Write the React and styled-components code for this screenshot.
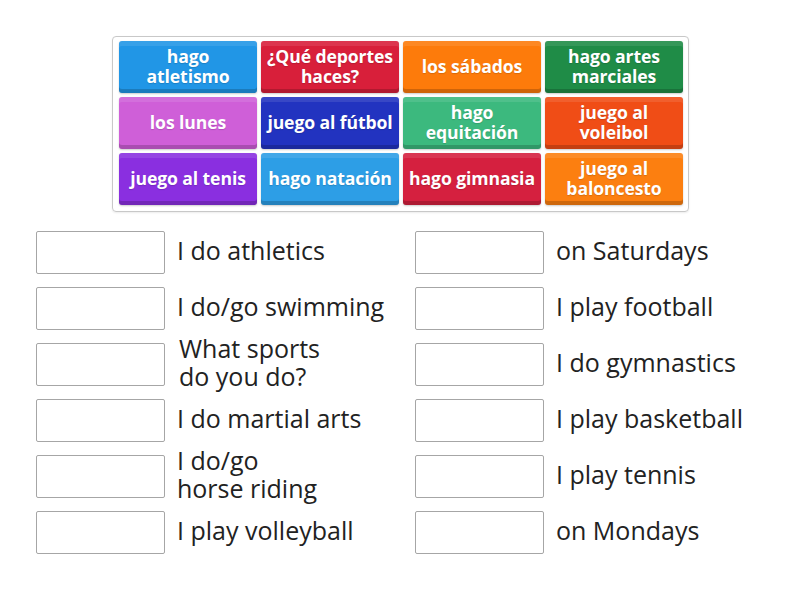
import React from "react";
import styled, { createGlobalStyle } from "styled-components";

const Global = createGlobalStyle`
  html, body { margin: 0; padding: 0; background: #fff; }
  body { font-family: "Open Sans", "Liberation Sans", sans-serif; }
`;

const Page = styled.div`
  width: 800px;
  height: 600px;
  padding-top: 36px;
  box-sizing: border-box;
`;

const Bank = styled.div`
  margin-left: 112px;
  width: fit-content;
  display: grid;
  grid-template-columns: repeat(4, 138px);
  grid-auto-rows: 52px;
  column-gap: 4px;
  row-gap: 4px;
  padding: 4px 5px 6px 6px;
  border: 1px solid #c8c8c8;
  border-radius: 4px;
  box-shadow: 0 1px 2px rgba(0,0,0,0.08);
`;

const Tile = styled.div`
  background: ${(p) => p.$c};
  border-radius: 3px;
  display: flex;
  align-items: center;
  justify-content: center;
  text-align: center;
  color: #fff;
  font-weight: 700;
  font-size: 17.6px;
  line-height: 20px;
  letter-spacing: -0.1px;
  white-space: pre-line;
  padding: 0 2px 2px;
  box-sizing: border-box;
  box-shadow: inset 0 5px 0 rgba(255,255,255,0.1), inset 0 -4px 0 rgba(0,0,0,0.18), 0 1px 2px rgba(0,0,0,0.2);
  text-shadow: 0 1px 1px rgba(0,0,0,0.15);
`;

const Answers = styled.div`
  display: grid;
  grid-template-columns: 379px 379px;
  grid-auto-flow: column;
  grid-template-rows: repeat(6, 43px);
  row-gap: 13px;
  margin: 19px 0 0 36px;
`;

const Item = styled.div`
  display: flex;
  align-items: center;
  gap: 12px;
`;

const Box = styled.div`
  width: 129px;
  height: 43px;
  box-sizing: border-box;
  border: 1px solid #a6a6a6;
  border-radius: 2px;
  background: #fff;
  flex: none;
`;

const Label = styled.div`
  font-size: 25px;
  line-height: 28px;
  color: #222;
  margin-bottom: 5px;
  padding-left: ${(p) => (p.$indent ? "2px" : "0")};
  white-space: nowrap;
`;

const tiles = [
  ["hago\natletismo", "#2196e6"],
  ["¿Qué deportes\nhaces?", "#d81f3a"],
  ["los sábados", "#fd7b0b"],
  ["hago artes\nmarciales", "#1f8c47"],
  ["los lunes", "#cf5fd8"],
  ["juego al fútbol", "#2233c0"],
  ["hago\nequitación", "#3cb97e"],
  ["juego al\nvoleibol", "#f04d16"],
  ["juego al tenis", "#8a2fe0"],
  ["hago natación", "#2d9ee6"],
  ["hago gimnasia", "#d5203f"],
  ["juego al\nbaloncesto", "#fc7f10"],
];

const answers = [
  ["I do athletics"],
  ["I do/go swimming"],
  ["What sports", "do you do?"],
  ["I do martial arts"],
  ["I do/go", "horse riding"],
  ["I play volleyball"],
  ["on Saturdays"],
  ["I play football"],
  ["I do gymnastics"],
  ["I play basketball"],
  ["I play tennis"],
  ["on Mondays"],
];

export default function App() {
  return (
    <Page>
      <Global />
      <Bank>
        {tiles.map(([t, c]) => (
          <Tile key={t} $c={c}>{t}</Tile>
        ))}
      </Bank>
      <Answers>
        {answers.map((lines) => (
          <Item key={lines.join(" ")}>
            <Box />
            <Label $indent={lines[0] === "What sports"}>
              {lines.map((l, i) => (
                <React.Fragment key={i}>
                  {i > 0 && <br />}
                  {l}
                </React.Fragment>
              ))}
            </Label>
          </Item>
        ))}
      </Answers>
    </Page>
  );
}
